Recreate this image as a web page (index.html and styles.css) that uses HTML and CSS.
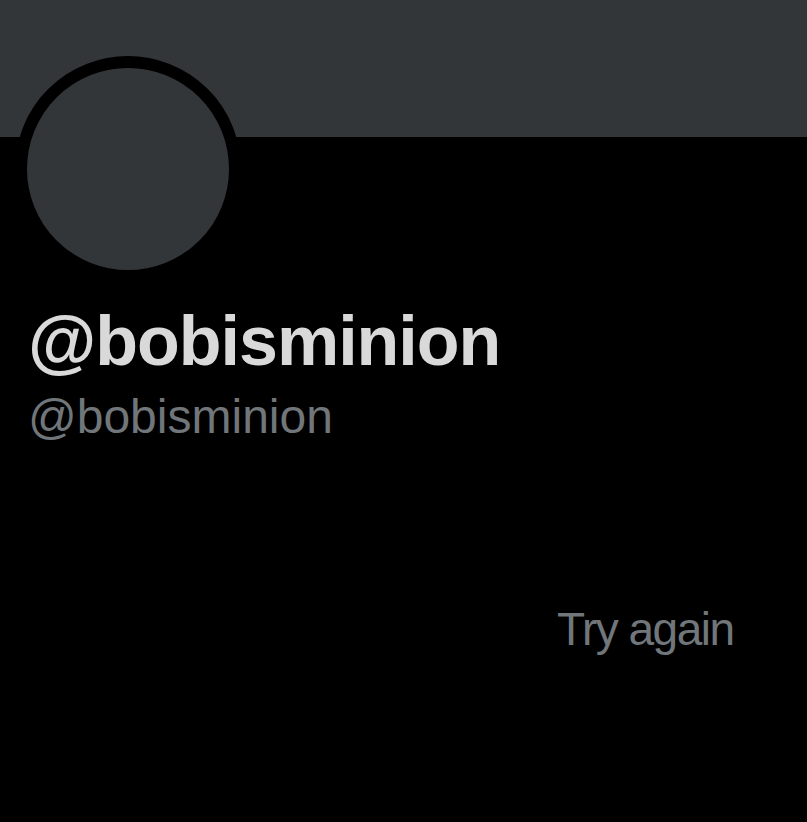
FILE: index.html
```html
<!DOCTYPE html>
<html>
<head>
<meta charset="utf-8">
<link rel="stylesheet" href="styles.css">
</head>
<body>
<div class="page">
  <div class="banner"></div>
  <div class="profile">
    <div class="avatar"></div>
    <div class="name">@bobisminion</div>
    <div class="handle">@bobisminion</div>
  </div>
  <div class="retry">
    <span class="retry-text">Try again</span>
  </div>
</div>
</body>
</html>
```
FILE: styles.css
```css
html, body {
  margin: 0;
  padding: 0;
  background: #000;
}
body {
  font-family: "Liberation Sans", Arial, sans-serif;
  width: 807px;
  height: 822px;
  overflow: hidden;
}
.page {
  display: flex;
  flex-direction: column;
}
.banner {
  height: 137px;
  background: #333639;
}
.profile {
  display: flex;
  flex-direction: column;
  padding-left: 28px;
}
.avatar {
  width: 202px;
  height: 202px;
  border: 12px solid #000;
  border-radius: 50%;
  background: #333639;
  margin-top: -81px;
  margin-left: -13px;
}
.name {
  margin-top: 24px;
  font-size: 70px;
  line-height: 70px;
  font-weight: 700;
  color: #d9d9d9;
  letter-spacing: -1px;
}
.handle {
  margin-top: 17px;
  font-size: 48px;
  line-height: 48px;
  color: #71767b;
  letter-spacing: 0;
}
.retry {
  display: flex;
  padding-left: 557px;
  margin-top: 165px;
}
.retry-text {
  font-size: 46px;
  line-height: 46px;
  color: #71767b;
  letter-spacing: -1.5px;
}
```
